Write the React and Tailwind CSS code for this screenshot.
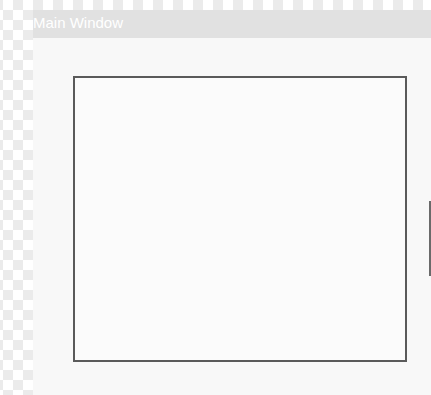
import React from "react";

const App = () => {
  return (
    <div className="w-[431px] h-[395px] overflow-hidden bg-white bg-[repeating-conic-gradient(#ebebeb_0_25%,#ffffff_0_50%)] bg-[length:20px_20px] bg-[position:3px_0px] pt-[10px] pl-[33px] flex flex-col">
      {/* Window */}
      <div className="flex-1 flex flex-col bg-[#f8f8f8]">
        {/* Title bar */}
        <div className="h-[28px] bg-[#e1e1e1] flex items-center pb-[4px]">
          <span className="text-white text-[15px] leading-none font-['Liberation_Sans',Arial,sans-serif]">
            Main Window
          </span>
        </div>

        {/* Content */}
        <div className="flex-1 flex items-start pl-[40px] pt-[38px] gap-[22px]">
          <div className="w-[334px] h-[286px] shrink-0 bg-[#fbfbfb] border-2 border-[#5a5a5a]" />
          <div className="w-[20px] h-[75px] shrink-0 mt-[125px] border-2 border-[#6a6a6a] bg-[#f2f2f2]" />
        </div>
      </div>
    </div>
  );
};

export default App;
